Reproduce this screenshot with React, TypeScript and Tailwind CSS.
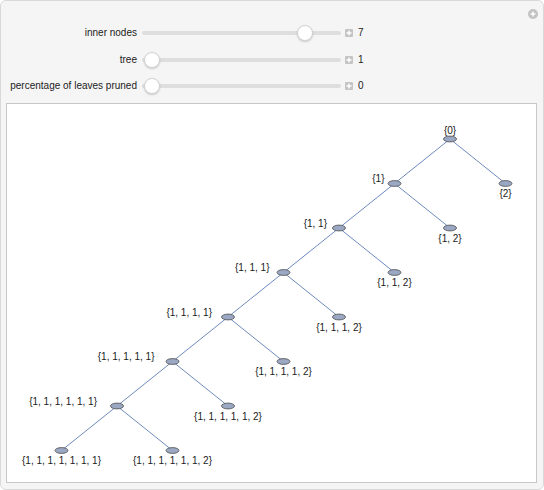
import React from "react";

type Row = { label: string; value: string; thumb: number };

const rows: Row[] = [
  { label: "inner nodes", value: "7", thumb: 155 },
  { label: "tree", value: "1", thumb: 2 },
  { label: "percentage of leaves pruned", value: "0", thumb: 2 },
];

const DX = 55.5;
const DY = 44.5;

function chainLabel(i: number) {
  if (i === 0) return "{0}";
  return "{" + Array(i).fill("1").join(", ") + "}";
}
function rightLabel(i: number) {
  return "{" + [...Array(i).fill("1"), "2"].join(", ") + "}";
}

function PlusSquare() {
  return (
    <div className="w-[8px] h-[8px] bg-[#c4c4c4] rounded-[1px] flex items-center justify-center">
      <svg width="6" height="6" viewBox="0 0 6 6">
        <path d="M3 0.5V5.5M0.5 3H5.5" stroke="#fff" strokeWidth="1.4" />
      </svg>
    </div>
  );
}

function SliderRow({ r }: { r: Row }) {
  return (
    <div className="flex items-center h-[26.5px]">
      <div className="w-[136px] text-right text-[10px] text-[#222] leading-none">{r.label}</div>
      <div className="relative w-[199px] h-[16px] ml-[5px]">
        <div className="absolute left-0 right-0 top-[6px] h-[4px] rounded-full bg-[#dedede]" />
        <div
          className="absolute top-0 w-[16px] h-[16px] rounded-full bg-white border border-[#d4d4d4] shadow-[0_1px_2px_rgba(0,0,0,0.18)]"
          style={{ left: r.thumb }}
        />
      </div>
      <div className="ml-[4px]">
        <PlusSquare />
      </div>
      <div className="ml-[5px] text-[10px] text-[#222] leading-none">{r.value}</div>
    </div>
  );
}

function Tree() {
  const chain = Array.from({ length: 8 }, (_, i) => ({ x: 450 - DX * i, y: 139 + DY * i }));
  const right = Array.from({ length: 7 }, (_, i) => ({ x: chain[i].x + DX, y: chain[i].y + DY }));
  const edges: [number, number, number, number][] = [];
  for (let i = 0; i < 7; i++) {
    edges.push([chain[i].x, chain[i].y, chain[i + 1].x, chain[i + 1].y]);
    edges.push([chain[i].x, chain[i].y, right[i].x, right[i].y]);
  }
  const nodes = [...chain, ...right];
  return (
    <svg width="529" height="378" viewBox="7 104 529 378" className="block">
      {edges.map((e, k) => (
        <line key={k} x1={e[0]} y1={e[1]} x2={e[2]} y2={e[3]} stroke="#6e8bbb" strokeWidth="1" />
      ))}
      {nodes.map((n, k) => (
        <ellipse key={k} cx={n.x} cy={n.y} rx="6.5" ry="2.9" fill="#9aa8c4" stroke="#4d4d4d" strokeWidth="0.8" />
      ))}
      <g fontSize="10" fill="#1a1a1a">
        {chain.map((n, i) => {
          if (i === 0)
            return (
              <text key={i} x={n.x} y={n.y - 5.5} textAnchor="middle">
                {chainLabel(i)}
              </text>
            );
          if (i === 7)
            return (
              <text key={i} x={n.x} y={n.y + 13.5} textAnchor="middle">
                {chainLabel(i)}
              </text>
            );
          return (
            <text key={i} x={n.x - (10 + 2 * (i - 1))} y={n.y - 1.2} textAnchor="end">
              {chainLabel(i)}
            </text>
          );
        })}
        {right.map((n, i) => (
          <text key={"r" + i} x={n.x} y={n.y + 13.5} textAnchor="middle">
            {rightLabel(i)}
          </text>
        ))}
      </g>
    </svg>
  );
}

export default function App() {
  return (
    <div className="w-[544px] h-[490px] font-['Liberation_Sans',Arial,sans-serif]">
      <div className="relative w-[544px] h-[490px] bg-[#f5f5f5] border border-[#d9d9d9] rounded-[6px] flex flex-col">
        <div className="absolute top-[8px] right-[5px] w-[10px] h-[10px] rounded-full bg-[#c2c2c2] flex items-center justify-center">
          <svg width="6" height="6" viewBox="0 0 6 6">
            <path d="M3 0.5V5.5M0.5 3H5.5" stroke="#fff" strokeWidth="1.4" />
          </svg>
        </div>
        <div className="pt-[19px] flex flex-col">
          {rows.map((r) => (
            <SliderRow key={r.label} r={r} />
          ))}
        </div>
        <div className="mt-[3.5px] ml-[5px] w-[531px] h-[380px] bg-white border border-[#c8c8c8]">
          <Tree />
        </div>
      </div>
    </div>
  );
}
